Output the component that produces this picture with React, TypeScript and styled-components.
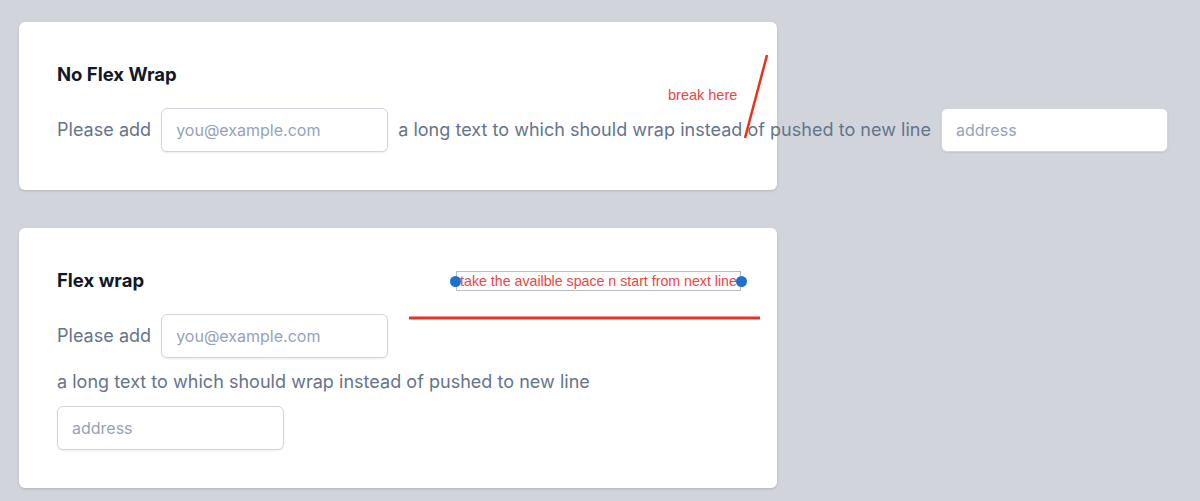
import React from 'react'
import styled, { createGlobalStyle } from 'styled-components'

const GlobalStyle = createGlobalStyle`
  body {
    margin: 0;
    background: #d1d5db;
    font-family: Inter, 'Liberation Sans', Arial, sans-serif;
  }
`

const Page = styled.div`
  display: flex;
  flex-direction: column;
  gap: 38px;
  padding: 22px 19px;
`

const Card = styled.section`
  position: relative;
  width: 758px;
  box-sizing: border-box;
  padding: 38px;
  background: #ffffff;
  border-radius: 6px;
  box-shadow: 0 1px 3px rgba(0, 0, 0, 0.1), 0 1px 2px rgba(0, 0, 0, 0.06);
`

const Title = styled.h2`
  margin: 0 0 20px;
  font-size: 18.5px;
  line-height: 28px;
  font-weight: 650;
  color: #111827;
`

const Row = styled.div<{ wrap?: boolean }>`
  display: flex;
  align-items: center;
  flex-wrap: ${({ wrap }) => (wrap ? 'wrap' : 'nowrap')};
  gap: 10px;
`

const Label = styled.span`
  flex-shrink: 0;
  white-space: nowrap;
  font-size: 18px;
  line-height: 28px;
  letter-spacing: 0.03px;
  color: #64748b;
`

const Input = styled.input`
  flex-shrink: 0;
  width: 227px;
  height: 44px;
  box-sizing: border-box;
  padding: 0 14px;
  border: 1px solid #d1d5db;
  border-radius: 6px;
  background: #ffffff;
  box-shadow: 0 1px 2px rgba(0, 0, 0, 0.08);
  font-family: inherit;
  font-size: 16px;
  color: #334155;
  outline: none;

  &::placeholder {
    color: #94a3b8;
  }
`

const Note = styled.span`
  position: absolute;
  font-family: 'Liberation Sans', Arial, sans-serif;
  font-size: 14.5px;
  line-height: 16px;
  color: #ef4444;
  white-space: nowrap;
`

const NoteBox = styled.div`
  position: absolute;
  left: 437px;
  top: 43px;
  width: 285px;
  height: 20px;
  box-sizing: border-box;
  border: 1px solid #b8bcc4;
  display: flex;
  align-items: center;
  justify-content: center;
  font-family: 'Liberation Sans', Arial, sans-serif;
  font-size: 14.2px;
  color: #ef4444;
  white-space: nowrap;
`

const Handle = styled.span<{ side: 'left' | 'right' }>`
  position: absolute;
  top: 4px;
  ${({ side }) => (side === 'left' ? 'left: -7px;' : 'right: -7px;')}
  width: 11px;
  height: 11px;
  border-radius: 50%;
  background: #1d6fd0;
`

const Stroke = styled.svg`
  position: absolute;
  left: 0;
  top: 0;
  overflow: visible;
  pointer-events: none;
`

export default function App() {
  return (
    <>
      <GlobalStyle />
      <Page>
        <Card>
          <Title>No Flex Wrap</Title>
          <Row>
            <Label>Please add</Label>
            <Input placeholder="you@example.com" />
            <Label>a long text to which should wrap instead of pushed to new line</Label>
            <Input placeholder="address" />
          </Row>
          <Note style={{ left: 649, top: 65 }}>break here</Note>
          <Stroke width="1" height="1">
            <line x1="748" y1="33" x2="726" y2="116" stroke="#e8321e" strokeWidth="2.5" />
          </Stroke>
        </Card>

        <Card>
          <Title>Flex wrap</Title>
          <Row wrap>
            <Label>Please add</Label>
            <Input placeholder="you@example.com" />
            <Label>a long text to which should wrap instead of pushed to new line</Label>
            <Input placeholder="address" />
          </Row>
          <NoteBox>
            <Handle side="left" />
            take the availble space n start from next line
            <Handle side="right" />
          </NoteBox>
          <Stroke width="1" height="1">
            <line x1="390" y1="90" x2="741" y2="90" stroke="#e8321e" strokeWidth="3" />
          </Stroke>
        </Card>
      </Page>
    </>
  )
}
